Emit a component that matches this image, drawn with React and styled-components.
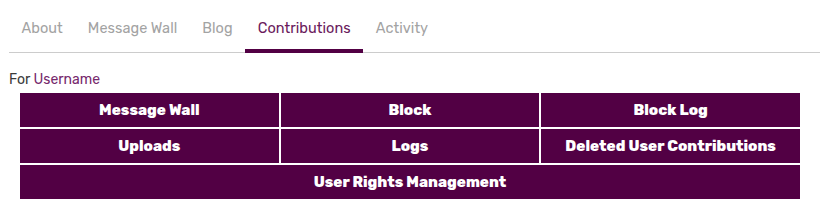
import React from "react";
import styled, { createGlobalStyle } from "styled-components";

const Global = createGlobalStyle`
  html, body { margin: 0; padding: 0; background: #fff; }
  body { font-family: "Rubik", "Noto Sans", "Liberation Sans", sans-serif; }
`;

const Page = styled.div`
  width: 811px;
  padding: 0 0 0 9px;
`;

const Tabs = styled.nav`
  display: flex;
  border-bottom: 1px solid #cccccc;
  height: 53px;
  box-sizing: border-box;
`;

const Tab = styled.span`
  display: flex;
  align-items: center;
  padding: 3px 12.5px 0;
  font-size: 14.5px;
  letter-spacing: 0.05px;
  color: ${(p) => (p.$active ? "#6a1a5c" : "#a3a3a3")};
  box-shadow: ${(p) => (p.$active ? "inset 0 -4px 0 #520044" : "none")};
  margin-bottom: -1px;
  cursor: pointer;
`;

const For = styled.div`
  margin-top: 18px;
  font-size: 14px;
  color: #3a3a3a;
  line-height: 17px;
`;

const UserLink = styled.span`
  color: #76286c;
  cursor: pointer;
`;

const Grid = styled.div`
  display: grid;
  grid-template-columns: repeat(3, 1fr);
  grid-auto-rows: 34px;
  gap: 2px;
  width: 780px;
  margin: 5px 0 0 11px;
`;

const Cell = styled.span`
  grid-column: ${(p) => (p.$span ? `span ${p.$span}` : "auto")};
  background: #520044;
  color: #fff;
  font-weight: 800;
  font-size: 15px;
  display: flex;
  align-items: center;
  justify-content: center;
  padding-bottom: 1px;
  cursor: pointer;
`;

const tabs = ["About", "Message Wall", "Blog", "Contributions", "Activity"];
const cells = [
  "Message Wall",
  "Block",
  "Block Log",
  "Uploads",
  "Logs",
  "Deleted User Contributions",
];

export default function App() {
  return (
    <>
      <Global />
      <Page>
        <Tabs>
          {tabs.map((t) => (
            <Tab key={t} $active={t === "Contributions"}>
              {t}
            </Tab>
          ))}
        </Tabs>
        <For>
          For <UserLink>Username</UserLink>
        </For>
        <Grid>
          {cells.map((c) => (
            <Cell key={c}>{c}</Cell>
          ))}
          <Cell $span={3}>User Rights Management</Cell>
        </Grid>
      </Page>
    </>
  );
}
